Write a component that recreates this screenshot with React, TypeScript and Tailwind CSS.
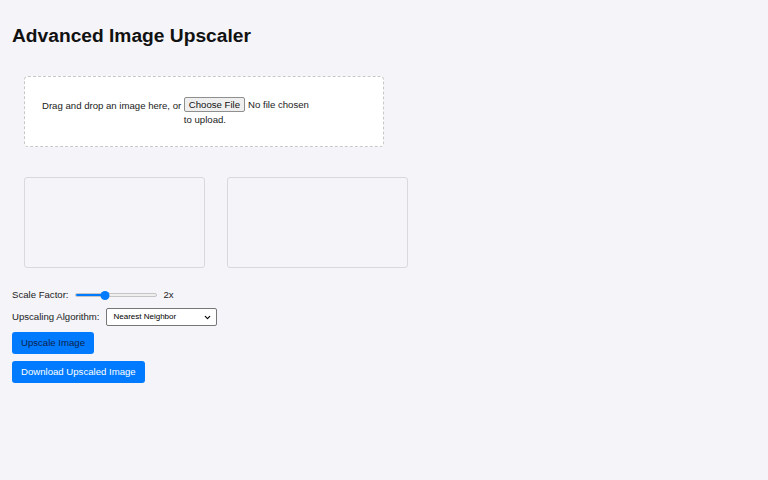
import { ChevronDown } from 'lucide-react'

const font = { fontFamily: '"Liberation Sans", Arial, sans-serif' }

// scale slider drawn by hand: 1x..4x, value 2x
function ScaleSlider({ value, min, max }: { value: number; min: number; max: number }) {
  const pct = ((value - min) / (max - min)) * 100
  return (
    <div className="relative flex h-[10px] w-[82px] items-center">
      <div className="h-[4px] w-full overflow-hidden rounded-full border border-[#c4c4c4] bg-[#efefef]">
        <div className="h-full bg-[#007bff]" style={{ width: `${pct}%` }} />
      </div>
      <div
        className="absolute top-[0.5px] h-[9px] w-[9px] -translate-x-1/2 rounded-full bg-[#007bff]"
        style={{ left: `calc(${pct}% + 3px)` }}
      />
    </div>
  )
}

export default function App() {
  return (
    <div className="min-h-[480px] bg-[#f4f4f9] p-[12px] text-[9.6px] text-[#222]" style={font}>
      <h1 className="mt-[13px] mb-[29px] text-[19.2px] leading-[22px] font-bold text-[#111]">
        Advanced Image Upscaler
      </h1>

      {/* drop zone */}
      <div className="mx-[12px] flex h-[71px] w-[360px] items-center rounded-[4px] border border-dashed border-[#c8c8c8] bg-white px-[17px]">
        <div className="flex items-start leading-[13px]">
          <span className="pt-[2px]">Drag and drop an image here, or&nbsp;</span>
          <div className="flex flex-col">
            <div className="flex items-center">
              <span className="rounded-[2px] border border-[#8f8f8f] bg-[#efefef] px-[4px] py-[1px] text-[9.6px] leading-[11px] text-[#111]">
                Choose File
              </span>
              <span className="ml-[3px]">No file chosen</span>
            </div>
            <span className="mt-[1px]">to upload.</span>
          </div>
        </div>
      </div>

      {/* previews */}
      <div className="mt-[30px] flex gap-[22px] px-[12px]">
        <div className="h-[91px] w-[181px] rounded-[3px] border border-[#d8d8de]" />
        <div className="h-[91px] w-[181px] rounded-[3px] border border-[#d8d8de]" />
      </div>

      {/* controls */}
      <div className="mt-[20px] flex items-center gap-[6px]">
        <span>Scale Factor:</span>
        <ScaleSlider value={2} min={1} max={4} />
        <span className="ml-[1px]">2x</span>
      </div>

      <div className="mt-[6px] flex items-center gap-[7px]">
        <span>Upscaling Algorithm:</span>
        <div className="flex h-[18px] w-[111px] items-center justify-between rounded-[2px] border border-[#767676] bg-white pr-[4px] pl-[6px] text-[8px] text-black">
          <span>Nearest Neighbor</span>
          <ChevronDown className="h-[9px] w-[9px]" strokeWidth={3} />
        </div>
      </div>

      <div className="mt-[6px] flex flex-col items-start gap-[7px]">
        <button className="h-[22px] rounded-[3px] bg-[#007bff] px-[9px] text-[9.6px] text-[#0b1f4a]">
          Upscale Image
        </button>
        <button className="h-[22px] rounded-[3px] bg-[#007bff] px-[9px] text-[9.6px] text-white">
          Download Upscaled Image
        </button>
      </div>
    </div>
  )
}
